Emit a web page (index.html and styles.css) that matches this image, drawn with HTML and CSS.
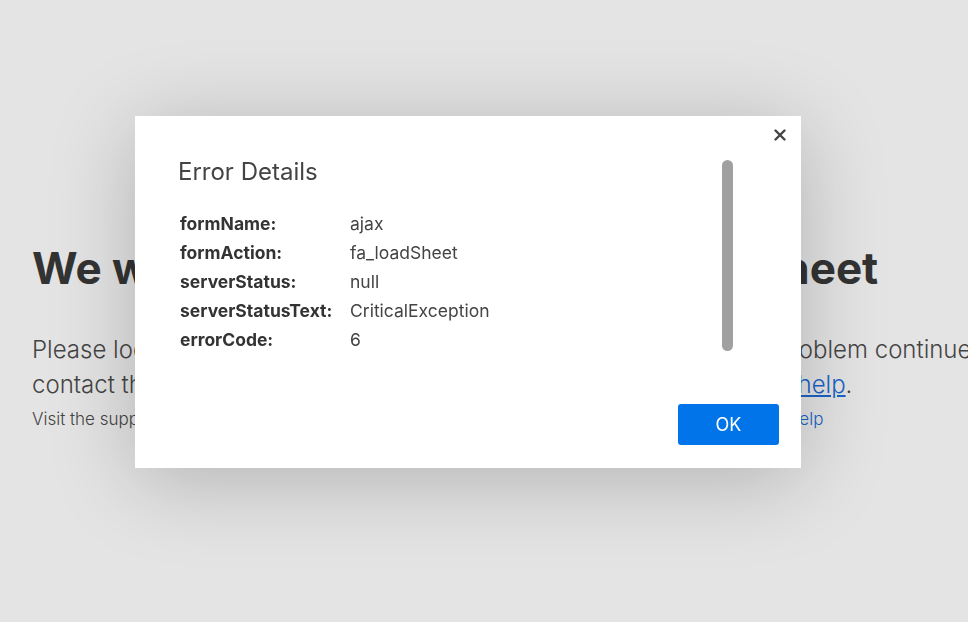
FILE: index.html
```html
<!DOCTYPE html>
<html lang="en">
  <head>
    <meta charset="UTF-8" />
    <link rel="stylesheet" href="styles.css">
  </head>
  <body>
    <div class="page">
      <h1 class="page-title">We were unable to load your worksheet</h1>
      <p class="page-text">
        Please log out and log back in to your account and try again. If the problem continues, please
      </p>
      <p class="page-text">
        contact the administrator or reach out to your support team for more <a href="#">help</a>.
      </p>
      <p class="page-small">
        Visit the support center for answers to the most common questions about using your sheets, or <a href="#">Help</a>
      </p>
    </div>

    <div class="overlay">
      <div class="modal">
        <button class="close-button" aria-label="close">
          <svg width="12" height="12" viewBox="0 0 12 12">
            <path d="M1.5 1.5 L10.5 10.5 M10.5 1.5 L1.5 10.5" stroke="#444" stroke-width="2.4" stroke-linecap="round" />
          </svg>
        </button>
        <div class="modal-content">
          <div class="modal-body">
            <div class="modal-title">Error Details</div>
            <table class="details">
              <tr><td class="label">formName:</td><td>ajax</td></tr>
              <tr><td class="label">formAction:</td><td>fa_loadSheet</td></tr>
              <tr><td class="label">serverStatus:</td><td>null</td></tr>
              <tr><td class="label">serverStatusText:</td><td>CriticalException</td></tr>
              <tr><td class="label">errorCode:</td><td>6</td></tr>
            </table>
          </div>
          <div class="scroll-thumb"></div>
        </div>
        <div class="modal-footer">
          <button class="ok-button">OK</button>
        </div>
      </div>
    </div>
  </body>
</html>
```

FILE: styles.css
```css
body {
  margin: 0;
  font-family: Inter, "Noto Sans", sans-serif;
  background-color: #e4e4e4;
  color: #444;
  overflow: hidden;
}
.page {
  padding: 240px 0 0 32px;
  white-space: nowrap;
}
.page-title {
  margin: 0 0 36px;
  font-size: 44px;
  font-weight: 700;
  color: #333;
  line-height: 56px;
}
.page-text {
  margin: 0;
  font-size: 24px;
  font-weight: 300;
  line-height: 35px;
  color: #444;
}
.page-text a {
  color: #1a64c8;
}
.page-small {
  margin: 2px 0 0;
  font-size: 17px;
  font-weight: 300;
  line-height: 30px;
}
.page-small a {
  color: #1a64c8;
  text-decoration: none;
}

.overlay {
  position: fixed;
  top: 0;
  left: 0;
  right: 0;
  bottom: 0;
}
.modal {
  position: absolute;
  top: 116px;
  left: 135px;
  width: 666px;
  box-sizing: border-box;
  padding: 42px 22px 23px 43px;
  background-color: #fff;
  box-shadow: 0 12px 80px rgba(0, 0, 0, 0.22);
}
.close-button {
  position: absolute;
  top: 13px;
  right: 15px;
  width: 12px;
  height: 12px;
  padding: 0;
  border: none;
  background: none;
  cursor: pointer;
  display: flex;
}
.modal-content {
  display: flex;
  align-items: flex-start;
  margin-right: 46px;
}
.modal-body {
  flex: 1;
}
.modal-title {
  font-size: 24px;
  font-weight: 400;
  line-height: 28px;
  color: #444;
  margin-bottom: 23px;
}
.details {
  border-collapse: collapse;
  font-size: 17.5px;
  color: #444;
}
.details td {
  padding: 0 2px;
  height: 29px;
  line-height: 29px;
  white-space: nowrap;
}
.details .label {
  width: 166px;
  font-weight: 700;
  color: #333;
}
.scroll-thumb {
  width: 11px;
  height: 191px;
  margin-top: 2px;
  border-radius: 6px;
  background-color: #a0a0a0;
  flex-shrink: 0;
}
.modal-footer {
  display: flex;
  justify-content: flex-end;
  margin-top: 50px;
}
.ok-button {
  width: 101px;
  height: 41px;
  border: none;
  border-radius: 3px;
  background-color: #0074e8;
  color: #fff;
  font-family: Inter, "Noto Sans", sans-serif;
  font-size: 18px;
  cursor: pointer;
}
```
